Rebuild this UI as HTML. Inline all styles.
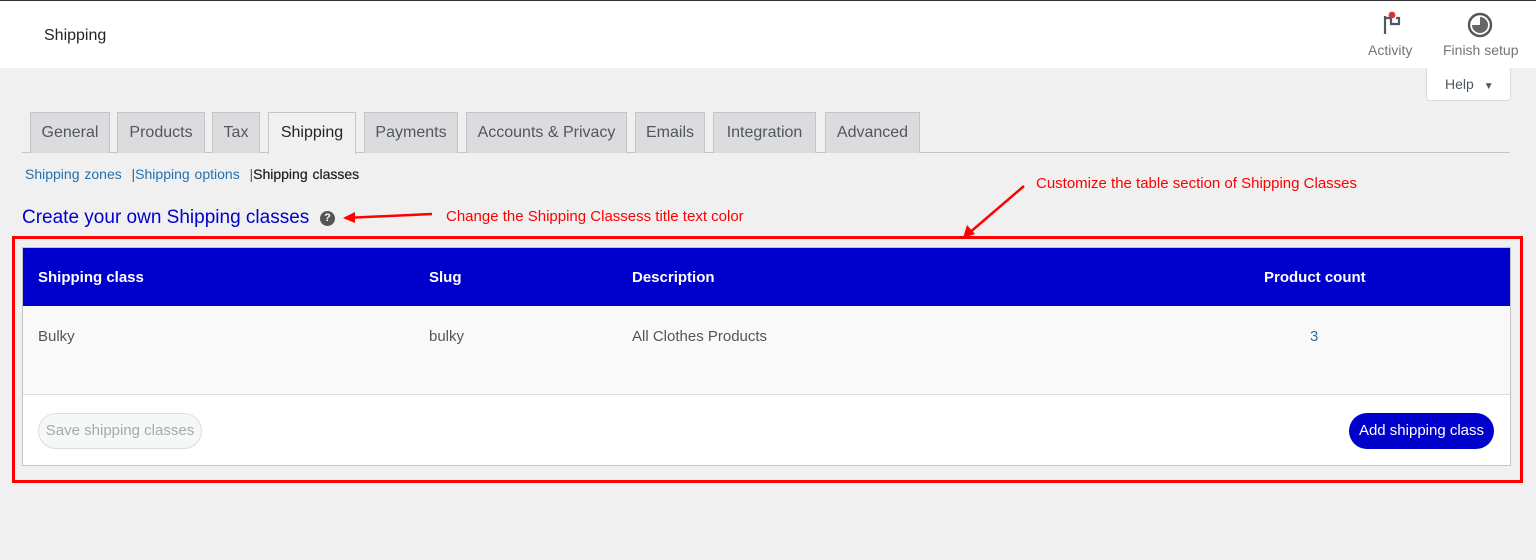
<!DOCTYPE html>
<html><head><style>
*{margin:0;padding:0;box-sizing:border-box}
body{width:1536px;height:560px;background:#f0f0f1;font-family:"Liberation Sans",sans-serif;position:relative;overflow:hidden;color:#3c434a}
.abs{position:absolute}
.hdr{left:0;top:0;width:1536px;height:68px;background:#fff;border-top:1px solid #333}
.tab{position:absolute;top:112px;height:41px;background:#dcdcde;border:1px solid #c3c4c7;border-bottom:none;font-size:16px;color:#50575e;text-align:center;line-height:40px}
.tab.on{background:#f0f0f1;color:#1d2327;height:42px}
.red{color:#f00;font-size:15px}
</style></head><body>
<div class="abs hdr"></div>
<div class="abs" style="left:44px;top:27px;font-size:16px;color:#1d2327">Shipping</div>
<svg class="abs" style="left:1380px;top:10px" width="26" height="28" viewBox="0 0 26 28"><path d="M5 6v18M5 8h6v6h8V8h-3" stroke="#50575e" stroke-width="2.2" fill="none"/><circle cx="12" cy="5" r="3.4" fill="#d63638"/></svg>
<div class="abs" style="left:1368px;top:42px;font-size:14px;color:#757575">Activity</div>
<svg class="abs" style="left:1467px;top:12px" width="26" height="26" viewBox="0 0 26 26"><circle cx="13" cy="13" r="11" fill="none" stroke="#555" stroke-width="2.4"/><path d="M13 13V5A8 8 0 1 1 5 13Z" fill="#666"/></svg>
<div class="abs" style="left:1443px;top:42px;font-size:14px;color:#757575">Finish setup</div>
<div class="abs" style="left:1426px;top:68px;width:85px;height:33px;background:#fff;border:1px solid #dcdcde;border-top:none;border-radius:0 0 4px 4px;font-size:14px;color:#50575e;line-height:32px;padding-left:18px">Help <span style="font-size:10px;margin-left:6px">▼</span></div>
<div class="abs" style="left:22px;top:152px;width:1488px;height:1px;background:#c3c4c7"></div>
<div class="tab" style="left:30px;width:80px">General</div>
<div class="tab" style="left:117px;width:88px">Products</div>
<div class="tab" style="left:212px;width:48px">Tax</div>
<div class="tab on" style="left:268px;width:88px">Shipping</div>
<div class="tab" style="left:364px;width:94px">Payments</div>
<div class="tab" style="left:466px;width:161px">Accounts &amp; Privacy</div>
<div class="tab" style="left:635px;width:70px">Emails</div>
<div class="tab" style="left:713px;width:103px">Integration</div>
<div class="tab" style="left:825px;width:95px">Advanced</div>
<div class="abs" style="left:25px;top:166px;font-size:14px;color:#2271b1;word-spacing:1px">Shipping zones <span style="color:#50575e">&nbsp;|</span>Shipping options <span style="color:#50575e">&nbsp;|</span><span style="color:#1d2327;text-shadow:0 0 0.5px #1d2327">Shipping classes</span></div>
<div class="abs" style="left:22px;top:207px;font-size:19px;color:#0000cc">Create your own Shipping classes</div>
<div class="abs" style="left:320px;top:211px;width:15px;height:15px;border-radius:50%;background:#555;color:#fff;font-size:11px;font-weight:bold;text-align:center;line-height:15px">?</div>
<svg class="abs" style="left:0;top:0" width="1536" height="560"><path d="M345 218L432 214" stroke="#f00" stroke-width="2.5"/><path d="M343 218l12-6v11z" fill="#f00"/><path d="M1024 186L968 234" stroke="#f00" stroke-width="2.5"/><path d="M963 238l4-13 8 9z" fill="#f00"/></svg>
<div class="abs red" style="left:446px;top:208px">Change the Shipping Classess title text color</div>
<div class="abs red" style="left:1036px;top:175px">Customize the table section of Shipping Classes</div>
<div class="abs" style="left:12px;top:236px;width:1511px;height:247px;border:3px solid #f00"></div>
<div class="abs" style="left:22px;top:247px;width:1489px;height:219px;border:1px solid #c3c4c7;background:#fff"></div>
<div class="abs" style="left:23px;top:248px;width:1487px;height:58px;background:#0000cc;color:#fff;font-size:15px;font-weight:bold">
<span class="abs" style="left:15px;top:21px">Shipping class</span><span class="abs" style="left:406px;top:21px">Slug</span><span class="abs" style="left:609px;top:21px">Description</span><span class="abs" style="left:1241px;top:21px">Product count</span></div>
<div class="abs" style="left:23px;top:306px;width:1487px;height:89px;background:#f9f9f9;border-bottom:1px solid #dcdcde;font-size:15px;color:#50575e">
<span class="abs" style="left:15px;top:22px">Bulky</span><span class="abs" style="left:406px;top:22px">bulky</span><span class="abs" style="left:609px;top:22px">All Clothes Products</span><span class="abs" style="left:1287px;top:22px;color:#2271b1">3</span></div>
<div class="abs" style="left:38px;top:413px;width:164px;height:36px;border:1px solid #dcdcde;border-radius:18px;color:#a7aaad;font-size:15px;line-height:34px;text-align:center;background:#f6f7f7">Save shipping classes</div>
<div class="abs" style="left:1349px;top:413px;width:145px;height:36px;border-radius:18px;background:#0000cc;color:#fff;font-size:15px;line-height:36px;text-align:center">Add shipping class</div>
</body></html>
